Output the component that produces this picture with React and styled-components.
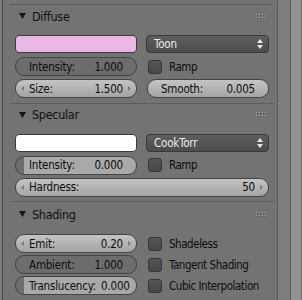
import React from 'react'
import styled, { createGlobalStyle } from 'styled-components'

const GlobalStyle = createGlobalStyle`
  html, body {
    margin: 0;
    padding: 0;
    background: #737373;
  }
  body {
    font-family: "DejaVu Sans", "Liberation Sans", sans-serif;
    font-stretch: condensed;
  }
`

const Frame = styled.div`
  display: flex;
  width: 302px;
  height: 300px;
  overflow: hidden;
  background: #737373;
`
const LeftGutter = styled.div`
  width: 2px;
  background: #7b7b7b;
  border-right: 1px solid #484848;
`
const Column = styled.div`
  flex: 1;
  display: flex;
  flex-direction: column;
  padding-top: 4px;
`
const Scrollbar = styled.div`
  width: 24px;
  display: flex;
  border-left: 1px solid #5c5c5c;
`
const Track = styled.div`
  width: ${p => p.$w}px;
  background: ${p => p.$bg};
  border-right: ${p => (p.$line ? '1px solid #595959' : 'none')};
`

const Panel = styled.section`
  margin: 0 4px 0 7px;
  height: 100px;
  box-sizing: border-box;
  border-top: 1px solid #5d5d5d;
  display: flex;
  flex-direction: column;
`
const Header = styled.div`
  height: ${p => p.$h}px;
  display: flex;
  align-items: center;
  padding: 0 6px 0 9px;
  gap: 6px;
  color: #111;
  font-size: 12.5px;
  letter-spacing: -0.3px;
`
const Title = styled.span`
  flex: 1;
`
const Body = styled.div`
  display: grid;
  grid-template-columns: 122px 1fr;
  grid-auto-rows: 19px;
  column-gap: 10px;
  row-gap: ${p => p.$gap}px;
  padding: 8px 4px 0 5px;
`
const Wide = styled.div`
  grid-column: 1 / -1;
  display: flex;
`

const Swatch = styled.div`
  box-sizing: border-box;
  height: 18px;
  border: 1px solid #3a3a3a;
  border-radius: 4px;
  background: ${p => p.$color};
`
const Dropdown = styled.div`
  box-sizing: border-box;
  height: 18px;
  margin-left: -1px;
  display: flex;
  align-items: center;
  padding: 0 5px 0 7px;
  border: 1px solid #383838;
  border-radius: 4px;
  background: linear-gradient(#5e5e5e, #4c4c4c);
  color: #ececec;
  font-size: 11.5px;
  letter-spacing: -0.2px;
`
const DropText = styled.span`
  flex: 1;
`

const Field = styled.div`
  box-sizing: border-box;
  flex: 1;
  height: 19px;
  display: flex;
  align-items: center;
  gap: 5px;
  padding: 0 5px;
  border: 1px solid #444;
  border-radius: 9px;
  color: #0c0c0c;
  font-size: 11.5px;
  letter-spacing: -0.2px;
  white-space: nowrap;
  background: ${p =>
    p.$slider
      ? `linear-gradient(90deg, #6d6d6d calc(8px + (100% - 8px) * ${p.$fill}), #a9a9a9 calc(8px + (100% - 8px) * ${p.$fill}))`
      : 'linear-gradient(#c4c4c4, #a4a4a4)'};
`
const Label = styled.span`
  flex: 1;
`
const Value = styled.span``

const Arrow = styled.svg`
  width: 3px;
  height: 5px;
  flex: none;
  visibility: ${p => (p.$hidden ? 'hidden' : 'visible')};
`

const CheckRow = styled.label`
  display: flex;
  align-items: center;
  gap: 7px;
  padding-left: 1px;
  color: #0c0c0c;
  font-size: 11.5px;
  letter-spacing: -0.45px;
  white-space: nowrap;
`
const Box = styled.span`
  box-sizing: border-box;
  width: 14px;
  height: 14px;
  border: 1px solid #363636;
  border-radius: 3px;
  background: linear-gradient(#555, #474747);
`

const Triangle = () => (
  <svg width="7" height="6" viewBox="0 0 7 6">
    <polygon points="0,0 7,0 3.5,6" fill="#151515" />
  </svg>
)

const Grip = () => (
  <svg width="11" height="5" viewBox="0 0 11 5">
    {[0, 3, 6, 9].map(x =>
      [0, 3].map(y => (
        <g key={`${x}-${y}`}>
          <rect x={x + 1} y={y + 1} width="1" height="1" fill="#5a5a5a" />
          <rect x={x} y={y} width="1" height="1" fill="#a8a8a8" />
        </g>
      ))
    )}
  </svg>
)

const UpDown = () => (
  <svg width="6" height="10" viewBox="0 0 6 10">
    <polygon points="3,0 6,4 0,4" fill="#e6e6e6" />
    <polygon points="0,6 6,6 3,10" fill="#e6e6e6" />
  </svg>
)

const NumField = ({ label, value, arrows, slider, fill = 0 }) => (
  <Field $slider={slider} $fill={fill}>
    <Arrow viewBox="0 0 3 5" $hidden={!arrows}>
      <polygon points="3,0 3,5 0,2.5" fill="#7a7a7a" />
    </Arrow>
    <Label>{label}</Label>
    <Value>{value}</Value>
    <Arrow viewBox="0 0 3 5" $hidden={!arrows}>
      <polygon points="0,0 3,2.5 0,5" fill="#7a7a7a" />
    </Arrow>
  </Field>
)

const Check = ({ children }) => (
  <CheckRow>
    <Box />
    {children}
  </CheckRow>
)

const PanelBlock = ({ title, headerH = 22, gap = 3, children }) => (
  <Panel>
    <Header $h={headerH}>
      <Triangle />
      <Title>{title}</Title>
      <Grip />
    </Header>
    <Body $gap={gap}>{children}</Body>
  </Panel>
)

export default function App() {
  return (
    <Frame>
      <GlobalStyle />
      <LeftGutter />
      <Column>
        <PanelBlock title="Diffuse">
          <Swatch $color="#e9b7e3" />
          <Dropdown>
            <DropText>Toon</DropText>
            <UpDown />
          </Dropdown>
          <NumField label="Intensity:" value="1.000" slider fill={1} />
          <Check>Ramp</Check>
          <NumField label="Size:" value="1.500" arrows />
          <NumField label="Smooth:" value="0.005" />
        </PanelBlock>
        <PanelBlock title="Specular">
          <Swatch $color="#ffffff" />
          <Dropdown>
            <DropText>CookTorr</DropText>
            <UpDown />
          </Dropdown>
          <NumField label="Intensity:" value="0.000" slider fill={0} />
          <Check>Ramp</Check>
          <Wide>
            <NumField label="Hardness:" value="50" arrows />
          </Wide>
        </PanelBlock>
        <PanelBlock title="Shading" headerH={24} gap={2}>
          <NumField label="Emit:" value="0.20" arrows />
          <Check>Shadeless</Check>
          <NumField label="Ambient:" value="1.000" slider fill={1} />
          <Check>Tangent Shading</Check>
          <NumField label="Translucency:" value="0.000" slider fill={0} />
          <Check>Cubic Interpolation</Check>
        </PanelBlock>
      </Column>
      <Scrollbar>
        <Track $w={12} $bg="#7e7e7e" $line />
        <Track $w={10} $bg="#939393" />
      </Scrollbar>
    </Frame>
  )
}
